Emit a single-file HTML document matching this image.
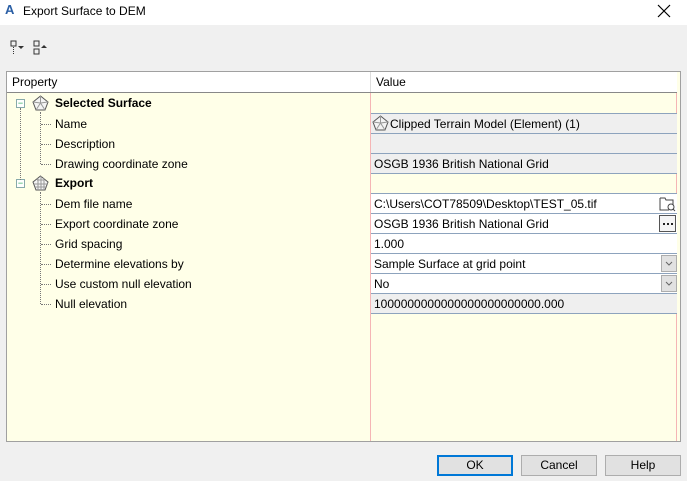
<!DOCTYPE html><html><head><style>
body{margin:0;width:687px;height:481px;background:#f0f0f0;font-family:"Liberation Sans",sans-serif;font-size:12px;color:#000;position:relative;overflow:hidden}
.a{position:absolute}
.t{position:absolute;white-space:nowrap;line-height:20px}
.v{position:absolute;left:371px;width:306px;border-bottom:1px solid #8da3bd;line-height:20px;padding-left:3px;box-sizing:border-box;height:20px}
.g{background:#efefef}.w{background:#fff}
.dd{position:absolute;right:0;top:1px;width:16px;height:17px;background:#e1e1e1;border:1px solid #adadad;box-sizing:border-box}
.btn{position:absolute;top:455px;width:76px;height:21px;background:#e1e1e1;border:1px solid #adadad;box-sizing:border-box;text-align:center;line-height:19px}
.dv{position:absolute;border-left:1px dotted #777}
.dh{position:absolute;border-top:1px dotted #777;width:10px}
</style></head><body>
<div class="a" style="left:0;top:0;width:687px;height:25px;background:#fff"></div>
<div class="t" style="left:5px;top:0;font-weight:bold;color:#2b5fa5;font-size:13px">A</div>
<div class="t" style="left:23px;top:1px">Export Surface to DEM</div>
<svg class="a" style="left:657px;top:4px" width="14" height="14"><path d="M1 1l12 12M13 1L1 13" stroke="#000" stroke-width="1.2"/></svg>
<svg class="a" style="left:10px;top:40px" width="40" height="16"><rect x="1" y="1" width="5" height="5" fill="none" stroke="#333"/><path d="M3.5 7v7" stroke="#333" stroke-dasharray="1 1"/><path d="M8 6h6l-3 3z" fill="#333"/><rect x="24" y="1" width="5" height="5" fill="none" stroke="#333"/><rect x="24" y="9" width="5" height="5" fill="none" stroke="#333"/><path d="M31 8h6l-3-3z" fill="#333"/></svg>
<div class="a" style="left:6px;top:71px;width:675px;height:371px;border:1px solid #a0a0a0;box-sizing:border-box;background:#ffffe8"></div>
<div class="a" style="left:7px;top:72px;width:670px;height:20px;background:#fff;border-bottom:1px solid #888"></div>
<div class="a" style="left:370px;top:72px;width:1px;height:20px;background:#ddd"></div>
<div class="t" style="left:12px;top:72px">Property</div>
<div class="t" style="left:376px;top:72px">Value</div>
<div class="a" style="left:370px;top:93px;width:1px;height:348px;background:#f5b5b5"></div>
<div class="a" style="left:676px;top:93px;width:1px;height:348px;background:#f5b5b5"></div>
<div class="a" style="left:371px;top:113px;width:306px;height:1px;background:#8da3bd"></div>
<div class="a" style="left:16px;top:99px;width:9px;height:9px;border:1px solid #8aa;box-sizing:border-box;background:#fff;font-size:9px;line-height:6px;text-align:center;color:#2a5">−</div>
<div class="a" style="left:16px;top:179px;width:9px;height:9px;border:1px solid #8aa;box-sizing:border-box;background:#fff;font-size:9px;line-height:6px;text-align:center;color:#2a5">−</div>
<div class="dv" style="left:20px;top:108px;height:72px"></div>
<div class="dv" style="left:40px;top:112px;height:52px"></div>
<div class="dv" style="left:40px;top:192px;height:112px"></div>
<div class="dh" style="left:41px;top:124px"></div><div class="dh" style="left:41px;top:144px"></div><div class="dh" style="left:41px;top:164px"></div>
<div class="dh" style="left:41px;top:204px"></div><div class="dh" style="left:41px;top:224px"></div><div class="dh" style="left:41px;top:244px"></div><div class="dh" style="left:41px;top:264px"></div><div class="dh" style="left:41px;top:284px"></div><div class="dh" style="left:41px;top:304px"></div>
<svg class="a" style="left:32px;top:95px" width="18" height="17"><path d="M8.5 1L16 7 13 15H4L1 7z" fill="#f4f4f4" stroke="#555"/><path d="M8.5 1v7L4 15M8.5 8L13 15M1 7l7.5 1L16 7" stroke="#999" fill="none"/></svg>
<svg class="a" style="left:32px;top:175px" width="18" height="17"><path d="M8.5 1L16 7 13 15H4L1 7z" fill="#f4f4f4" stroke="#555"/><path d="M2 9h14M3 12h12M5 5h7M6 3v12M9 1v14M12 3v12" stroke="#999" fill="none"/></svg>
<div class="t" style="left:55px;top:93px;font-weight:bold">Selected Surface</div>
<div class="t" style="left:55px;top:114px">Name</div>
<div class="t" style="left:55px;top:134px">Description</div>
<div class="t" style="left:55px;top:154px">Drawing coordinate zone</div>
<div class="t" style="left:55px;top:173px;font-weight:bold">Export</div>
<div class="t" style="left:55px;top:194px">Dem file name</div>
<div class="t" style="left:55px;top:214px">Export coordinate zone</div>
<div class="t" style="left:55px;top:234px">Grid spacing</div>
<div class="t" style="left:55px;top:254px">Determine elevations by</div>
<div class="t" style="left:55px;top:274px">Use custom null elevation</div>
<div class="t" style="left:55px;top:294px">Null elevation</div>
<div class="v g" style="top:114px;padding-left:19px">Clipped Terrain Model (Element) (1)<svg class="a" style="left:1px;top:1px" width="18" height="17"><path d="M8.5 1L16 7 13 15H4L1 7z" fill="#f4f4f4" stroke="#555"/><path d="M8.5 1v7L4 15M8.5 8L13 15M1 7l7.5 1L16 7" stroke="#999" fill="none"/></svg></div>
<div class="v g" style="top:134px"></div>
<div class="v g" style="top:154px">OSGB 1936 British National Grid</div>
<div class="v" style="top:174px"></div>
<div class="v w" style="top:194px">C:\Users\COT78509\Desktop\TEST_05.tif<svg class="a" style="right:1px;top:1px" width="17" height="17"><path d="M1 3h5l1 2h7v5M1 3v12h9" fill="none" stroke="#444"/><circle cx="12" cy="12" r="3" fill="none" stroke="#444"/><path d="M14 14l2 2" stroke="#444"/></svg></div>
<div class="v w" style="top:214px">OSGB 1936 British National Grid<svg class="a" style="right:1px;top:1px" width="17" height="17"><rect x="0.5" y="0.5" width="16" height="16" fill="#f5f5f5" stroke="#555"/><rect x="4" y="8" width="2" height="2" fill="#222"/><rect x="8" y="8" width="2" height="2" fill="#222"/><rect x="12" y="8" width="2" height="2" fill="#222"/></svg></div>
<div class="v w" style="top:234px">1.000</div>
<div class="v w" style="top:254px">Sample Surface at grid point<div class="dd"><svg width="14" height="15"><path d="M4 6l3 3 3-3" fill="none" stroke="#666"/></svg></div></div>
<div class="v w" style="top:274px">No<div class="dd"><svg width="14" height="15"><path d="M4 6l3 3 3-3" fill="none" stroke="#666"/></svg></div></div>
<div class="v g" style="top:294px">1000000000000000000000000.000</div>
<div class="btn" style="left:437px;border:2px solid #0078d7;line-height:17px">OK</div>
<div class="btn" style="left:521px">Cancel</div>
<div class="btn" style="left:605px">Help</div>
</body></html>
